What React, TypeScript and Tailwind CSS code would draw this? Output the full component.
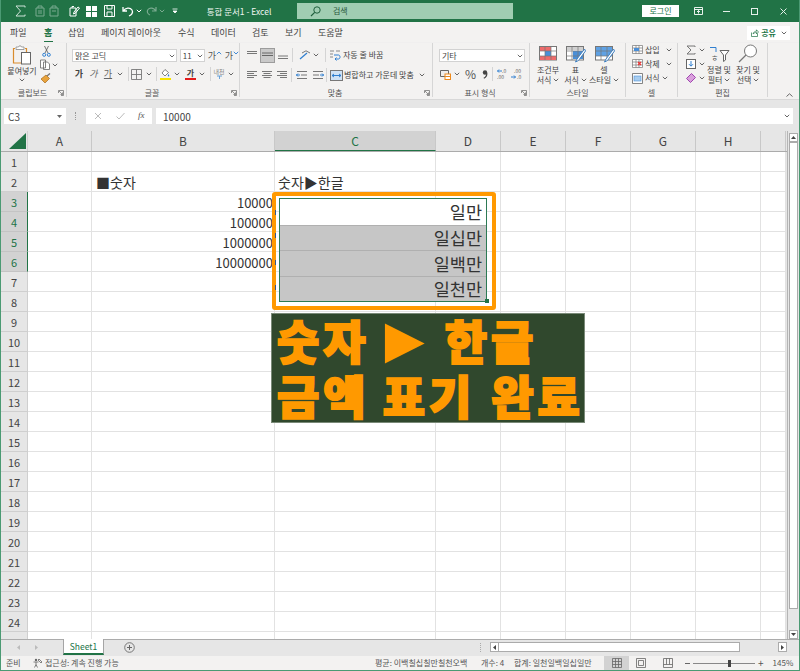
import type { ReactNode } from "react";

const KR = "font-['Noto_Sans_CJK_KR','Noto_Sans',sans-serif]";

const COLS = [
  { name: "A", w: "w-[64px]" },
  { name: "B", w: "w-[183px]" },
  { name: "C", w: "w-[161px]" },
  { name: "D", w: "w-[65px]" },
  { name: "E", w: "w-[65px]" },
  { name: "F", w: "w-[65px]" },
  { name: "G", w: "w-[65px]" },
  { name: "H", w: "w-[65px]" },
  { name: "", w: "w-[25px]" },
];

const ROWS = Array.from({ length: 25 }, (_, i) => i + 1);

const CELLS: Record<string, string> = {
  B2: "■숫자",
  C2: "숫자▶한글",
  B3: "10000",
  B4: "100000",
  B5: "1000000",
  B6: "10000000",
};

function Chev({ className = "" }: { className?: string }) {
  return (
    <svg width="6" height="4" viewBox="0 0 6 4" className={`shrink-0 ${className}`}>
      <path d="M.8.8 3 3l2.2-2.2" fill="none" stroke="#666" strokeWidth="1" />
    </svg>
  );
}

function WChev({ faint }: { faint?: boolean }) {
  return (
    <svg width="6" height="4" viewBox="0 0 6 4" className={faint ? "opacity-40" : ""}>
      <path d="M.8.8 3 3l2.2-2.2" fill="none" stroke="#fff" strokeWidth="1" />
    </svg>
  );
}

function Sep({ className = "" }: { className?: string }) {
  return <div className={`h-[14px] w-px shrink-0 bg-[#d4d4d4] ${className}`} />;
}

function Launcher() {
  return (
    <svg width="6" height="6" viewBox="0 0 6 6" className="mr-[2px] shrink-0">
      <path d="M.5 3V.5H5.500V5.500H3M1 1l3.500 3.500M2.500 4.500H4.500V2.500" fill="none" stroke="#777" strokeWidth=".8" />
    </svg>
  );
}

function Group({
  w,
  label,
  launcher,
  children,
}: {
  w: string;
  label: string;
  launcher?: boolean;
  children: ReactNode;
}) {
  return (
    <div className={`${w} mb-[2px] flex shrink-0 flex-col border-r border-[#d6d6d6]`}>
      <div className="h-[46px]">{children}</div>
      <div className="flex h-[9px] items-center justify-between">
        <span className="w-[6px]" />
        <span className="text-[8px] leading-none text-[#555]">{label}</span>
        {launcher ? <Launcher /> : <span className="w-[6px]" />}
      </div>
    </div>
  );
}

function Align({ kind }: { kind: "l" | "c" | "r" }) {
  const p =
    kind === "l"
      ? "M1 1.500H11M1 3.500H8M1 5.500H11M1 7.500H8"
      : kind === "c"
        ? "M1 1.500H11M2.500 3.500H9.500M1 5.500H11M2.500 7.500H9.500"
        : "M1 1.500H11M4 3.500H11M1 5.500H11M4 7.500H11";
  return (
    <svg width="12" height="10" viewBox="0 0 12 10">
      <path d={p} stroke="#777" strokeWidth="1" />
    </svg>
  );
}

function GridIcon({ tint, brush }: { tint: "red" | "blue" | "cell"; brush?: boolean }) {
  return (
    <svg width="20" height="17" viewBox="0 0 20 17" className="ml-[1px]">
      <rect x=".5" y=".5" width="17" height="13.500" fill="#fff" stroke="#777" />
      {tint === "red" && (
        <>
          <rect x="1" y="1" width="11" height="4" fill="#ee6b6b" />
          <rect x="1" y="10" width="16" height="4" fill="#ee6b6b" />
          <rect x="6" y="5" width="6" height="5" fill="#4a8fd8" />
        </>
      )}
      {tint === "blue" && (
        <>
          <rect x="1" y="1" width="16" height="3" fill="#d0d0d0" />
          <rect x="7" y="5" width="10" height="8" fill="#4a8fd8" />
        </>
      )}
      {tint === "cell" && <rect x="1" y="1" width="16" height="9" fill="#5ea1e4" />}
      <path d="M6 1V14M12 1V14M1 5H17M1 10H17" stroke="#777" strokeWidth=".7" />
      {brush && <path d="M18.500 3 11 13l-1.500 3 3-1.500L19.500 5z" fill="#fff" stroke="#3f7fbf" strokeWidth="1" />}
    </svg>
  );
}

function QuickBar() {
  return (
    <div className="flex h-[22px] shrink-0 items-center bg-[#217346] text-white">
      <div className="flex w-[190px] items-center pl-[14px]">
        <svg width="11" height="12" viewBox="0 0 11 12">
          <path d="M10 2.500V1H1l4.500 5L1 11h9V9.500" fill="none" stroke="#cfe3d8" strokeWidth="1" />
        </svg>
        <svg width="10" height="12" viewBox="0 0 10 12" className="ml-[9px] opacity-40">
          <path d="M1 3h8v8H1zM3 3V1h4v2M3 6h4M3 8h4" fill="none" stroke="#fff" />
        </svg>
        <svg width="10" height="12" viewBox="0 0 10 12" className="ml-[4px] opacity-40">
          <path d="M1 3h8v8H1zM3 3V1h4v2M3 6h4" fill="none" stroke="#fff" />
        </svg>
        <svg width="11" height="12" viewBox="0 0 11 12" className="ml-[10px]">
          <path d="M1 3h6v8H1zM3 3V1.500h2M5 7l4-5 1.500 1-4 5-2 1z" fill="none" stroke="#fff" />
        </svg>
        <svg width="11" height="11" viewBox="0 0 11 11" className="ml-[6px]">
          <path d="M0 0h5v5H0zM6 0h5v5H6zM0 6h5v5H0zM6 6h5v5H6z" fill="#fff" />
        </svg>
        <svg width="11" height="12" viewBox="0 0 11 12" className="ml-[7px]">
          <path d="M.5.500h10v11H.5zM3 .500v3.500h5V.500M3 11.500V7h5v4.500" fill="none" stroke="#fff" />
        </svg>
        <svg width="12" height="11" viewBox="0 0 12 11" className="ml-[7px]">
          <path d="M1 1v4h4M1.300 4.800C3.500 1.800 8 1 10 4c1.500 2.500-.5 5-3 6" fill="none" stroke="#fff" strokeWidth="1.300" />
        </svg>
        <span className="ml-[2px]">
          <WChev />
        </span>
        <svg width="11" height="10" viewBox="0 0 11 10" className="ml-[4px] opacity-40">
          <path d="M10 1v4H6M9.700 4.800C8 2 4 1 2 3.500c-1.500 2-.5 4.500 2 5.500" fill="none" stroke="#fff" strokeWidth="1.200" />
        </svg>
        <span className="ml-[2px]">
          <WChev faint />
        </span>
        <svg width="6" height="6" viewBox="0 0 6 6" className="ml-[7px]">
          <path d="M.5 1h5M1 3l2 2 2-2z" fill="#fff" stroke="#fff" strokeWidth=".8" />
        </svg>
      </div>
      <div className="flex w-[106px] justify-center pr-[10px]">
        <span className="whitespace-nowrap text-[8.500px] text-[#eef5f1]">통합 문서1 - Excel</span>
      </div>
      <div className="flex h-[16px] w-[216px] items-center bg-[#a0cdb2] pl-[13px]">
        <svg width="11" height="11" viewBox="0 0 11 11">
          <circle cx="7" cy="4" r="3.200" fill="none" stroke="#1f5f3d" />
          <path d="M4.700 6.300 1 10" stroke="#1f5f3d" strokeWidth="1.200" />
        </svg>
        <span className="ml-[12px] text-[8px] text-[#2a5a40]">검색</span>
      </div>
      <div className="ml-[129px] flex h-[12px] w-[37px] items-center justify-center bg-white text-[8px] text-[#217346]">
        로그인
      </div>
      <svg width="9" height="8" viewBox="0 0 9 8" className="ml-[15px]">
        <path d="M.5.500h8v7h-8zM.5 2.500h8M4.500 6.500V3.500M3 5l1.500-1.500L6 5" fill="none" stroke="#fff" strokeWidth=".9" />
      </svg>
      <div className="ml-[20px] h-px w-[7px] bg-[#e5efe9]" />
      <div className="ml-[21px] h-[7px] w-[7px] border border-[#e5efe9]" />
      <svg width="7" height="7" viewBox="0 0 7 7" className="ml-[22px]">
        <path d="M.5.500l6 6M6.500.500l-6 6" stroke="#e5efe9" />
      </svg>
    </div>
  );
}

function TabBar() {
  return (
    <div className="flex h-[21px] shrink-0 items-center bg-[#f3f2f1] pl-[1px] text-[9px] text-[#444]">
      <span className="ml-[8px] w-[34px]">파일</span>
      <span className="relative w-[24px] font-semibold text-[#217346]">
        홈
        <span className="absolute -bottom-[3px] left-0 h-[1.500px] w-[9px] bg-[#217346]" />
      </span>
      <span className="w-[33px]">삽입</span>
      <span className="w-[77px] whitespace-nowrap">페이지 레이아웃</span>
      <span className="w-[33px]">수식</span>
      <span className="w-[41px]">데이터</span>
      <span className="w-[33px]">검토</span>
      <span className="w-[33px]">보기</span>
      <span className="w-[33px]">도움말</span>
      <div className="ml-[396px] flex h-[14px] w-[43px] items-center justify-center gap-[2px] bg-white pl-[1px] text-[8px] font-semibold text-[#217346]">
        <svg width="8" height="8" viewBox="0 0 8 8">
          <path d="M.5 3.500v4h6v-3M2 5c.5-2 2-2.800 3.500-2.800V.8L7.500 3 5.500 5V3.500C4 3.500 3 4 2 5z" fill="none" stroke="#217346" strokeWidth=".7" />
        </svg>
        공유
        <Chev className="ml-[3px]" />
      </div>
    </div>
  );
}

function Clipboard() {
  return (
    <Group w="w-[66px]" label="클립보드" launcher>
      <div className="flex">
        <div className="flex w-[42px] flex-col items-center pt-[2px]">
          <svg width="20" height="20" viewBox="0 0 20 20">
            <path d="M3 3.500H1.500V18h8" fill="none" stroke="#d98c2e" strokeWidth="1.200" />
            <path d="M13 3.500h1.500V7" fill="none" stroke="#d98c2e" strokeWidth="1.200" />
            <path d="M4 4.500V2h2.500c0-1.600 3-1.600 3 0H12v2.500z" fill="#fff" stroke="#888" strokeWidth=".8" />
            <rect x="9.500" y="7.500" width="9" height="11.500" fill="#fff" stroke="#666" />
          </svg>
          <span className="whitespace-nowrap text-[8px] leading-[11px] text-[#444]">붙여넣기</span>
          <Chev className="mt-[2px]" />
        </div>
        <div className="flex flex-col items-start pt-[2px]">
          <svg width="9" height="12" viewBox="0 0 9 12" className="ml-[-1px]">
            <path d="M2.500 1 6 8M6.500 1 3 8" stroke="#555" strokeWidth=".8" />
            <circle cx="2.200" cy="9.800" r="1.500" fill="none" stroke="#2f7fd0" />
            <circle cx="6.800" cy="9.800" r="1.500" fill="none" stroke="#2f7fd0" />
          </svg>
          <div className="mt-[2px] flex items-center gap-[1px]">
            <svg width="11" height="11" viewBox="0 0 11 11" className="ml-[-3px]">
              <path d="M.5 1h5v8h-5zM3.500 3h4l2 2v5.500h-6z" fill="#fff" stroke="#666" strokeWidth=".8" />
            </svg>
            <Chev />
          </div>
          <svg width="11" height="11" viewBox="0 0 11 11" className="ml-[-3px] mt-[3px]">
            <path d="M1 6 6 2l3.500 3.500L5 10z" fill="#e8a33c" stroke="#a86a1a" strokeWidth=".7" />
            <path d="M7 3l3-2.500" stroke="#777" strokeWidth="1.400" />
          </svg>
        </div>
      </div>
    </Group>
  );
}

function FontGroup() {
  return (
    <Group w="w-[173px]" label="글꼴" launcher>
      <div className="mt-[6px] flex h-[13px] items-center pl-[5px]">
        <div className="flex h-[13px] w-[105px] items-center justify-between border border-[#d2d2d2] bg-white pl-[2px] pr-[1px] text-[8px] text-[#444]">
          맑은 고딕
          <Chev />
        </div>
        <div className="ml-[3px] flex h-[13px] w-[25px] items-center justify-between border border-[#d2d2d2] bg-white pl-[2px] pr-[1px] text-[8px] text-[#444]">
          11
          <Chev />
        </div>
        <span className="ml-[3px] flex w-[17px] items-start text-[9px] leading-none text-[#555]">
          가
          <svg width="6" height="4" viewBox="0 0 6 4">
            <path d="M.8 3.200 3 1l2.200 2.200" fill="none" stroke="#2f7fd0" strokeWidth=".9" />
          </svg>
        </span>
        <span className="flex items-start text-[9px] leading-none text-[#555]">
          가
          <svg width="6" height="4" viewBox="0 0 6 4">
            <path d="M.8.8 3 3l2.200-2.200" fill="none" stroke="#2f7fd0" strokeWidth=".9" />
          </svg>
        </span>
      </div>
      <div className="mt-[5px] flex h-[14px] items-center pl-[5px] text-[9px] text-[#444]">
        <span className="w-[14px] text-center font-bold">가</span>
        <span className="w-[15px] text-center italic text-[#666]">가</span>
        <span className="w-[14px] text-center text-[#666] underline">가</span>
        <div className="flex w-[9px] justify-center">
          <Chev />
        </div>
        <Sep className="ml-[4px]" />
        <svg width="11" height="11" viewBox="0 0 11 11" className="ml-[2px]">
          <path d="M.5.500h10v10H.5zM5.500.500v10M.5 5.500h10" fill="none" stroke="#777" strokeWidth=".9" />
        </svg>
        <Chev className="ml-[4px]" />
        <Sep className="ml-[4px]" />
        <div className="ml-[3px] flex w-[11px] flex-col items-center">
          <svg width="9" height="8" viewBox="0 0 9 8">
            <path d="M4 .500 1 4l3 3 3.500-3.500z" fill="#fff" stroke="#666" strokeWidth=".8" />
            <path d="M7.500 5c1 1.200 1 2.500 0 2.500S6.500 6.200 7.500 5" fill="#2f7fd0" />
          </svg>
          <div className="mt-[1px] h-[2px] w-[11px] bg-[#f7e300]" />
        </div>
        <Chev className="ml-[3px]" />
        <div className="ml-[5px] flex w-[11px] flex-col items-center">
          <span className="text-[8px] font-bold leading-[8px]">가</span>
          <div className="mt-[1px] h-[2px] w-[11px] bg-[#e31b1b]" />
        </div>
        <Chev className="ml-[3px]" />
        <Sep className="ml-[5px]" />
        <div className="ml-[1px] flex w-[14px] flex-col items-center text-[6px] leading-[7px] text-[#888]">
          <span>내천</span>
          <svg width="7" height="5" viewBox="0 0 7 5">
            <path d="M1 1h5M3.500 1v3" fill="none" stroke="#5a9ad8" strokeWidth=".9" />
          </svg>
        </div>
        <Chev className="ml-[2px]" />
      </div>
    </Group>
  );
}

function AlignGroup() {
  return (
    <Group w="w-[193px]" label="맞춤" launcher>
      <div className="mt-[5px] flex h-[14px] items-center pl-[6px]">
        <svg width="12" height="10" viewBox="0 0 12 10">
          <path d="M1 1.500H11M1 3.500H11" stroke="#777" />
        </svg>
        <div className="ml-[2px] flex h-[15px] w-[15px] items-center justify-center border border-[#9c9c9c] bg-[#c9c9c9]">
          <svg width="11" height="8" viewBox="0 0 11 8">
            <path d="M0 2H11M0 4.500H11" stroke="#666" />
          </svg>
        </div>
        <svg width="12" height="10" viewBox="0 0 12 10" className="ml-[2px]">
          <path d="M1 6H11M1 8.500H11" stroke="#777" />
        </svg>
        <Sep className="ml-[3px]" />
        <svg width="12" height="10" viewBox="0 0 12 10" className="ml-[6px]">
          <path d="M1 9 8 3" stroke="#2f7fd0" strokeWidth="1.200" />
          <path d="M3 3 7 .8 11 3" fill="none" stroke="#777" />
        </svg>
        <Chev className="ml-[2px]" />
        <Sep className="ml-[6px]" />
        <svg width="12" height="12" viewBox="0 0 12 12" className="ml-[3px]">
          <path d="M1 2H5M7 2H11M1 5H4M1 8H4" stroke="#888" />
          <path d="M5 6H9.500C11.500 6 11.500 10 9.500 10H6M7.500 8.500 6 10l1.500 1.500" fill="none" stroke="#2f7fd0" />
        </svg>
        <span className="ml-[2px] whitespace-nowrap text-[8px] text-[#444]">자동 줄 바꿈</span>
      </div>
      <div className="mt-[6px] flex h-[14px] items-center pl-[6px]">
        <Align kind="l" />
        <span className="ml-[3px]">
          <Align kind="c" />
        </span>
        <span className="ml-[3px]">
          <Align kind="r" />
        </span>
        <Sep className="ml-[3px]" />
        <svg width="12" height="10" viewBox="0 0 12 10" className="ml-[4px]">
          <path d="M1 1.500H11M5 5H11M1 8.500H11" stroke="#777" />
          <path d="M4 5H0M2 3.500.5 5 2 6.500" fill="none" stroke="#2f7fd0" />
        </svg>
        <svg width="12" height="10" viewBox="0 0 12 10" className="ml-[4px]">
          <path d="M1 1.500H11M1 5H7M1 8.500H11" stroke="#777" />
          <path d="M8 5h4M10 3.500 11.500 5 10 6.500" fill="none" stroke="#2f7fd0" />
        </svg>
        <Sep className="ml-[2px]" />
        <svg width="13" height="11" viewBox="0 0 13 11" className="ml-[3px]">
          <rect x=".5" y=".5" width="12" height="10" fill="#cfe2f5" stroke="#777" />
          <path d="M2 5.500H11M4 4 2 5.500 4 7M9 4l2 1.500L9 7" fill="none" stroke="#2f7fd0" />
        </svg>
        <span className="ml-[1px] whitespace-nowrap text-[8px] text-[#444]">병합하고 가운데 맞춤</span>
        <Chev className="ml-[5px]" />
      </div>
    </Group>
  );
}

function NumberGroup() {
  return (
    <Group w="w-[97px]" label="표시 형식" launcher>
      <div className="mt-[6px] pl-[6px]">
        <div className="flex h-[13px] w-[86px] items-center justify-between border border-[#d2d2d2] bg-white pl-[2px] pr-[1px] text-[8px] text-[#444]">
          기타
          <Chev />
        </div>
      </div>
      <div className="mt-[5px] flex h-[14px] items-center pl-[7px] text-[#555]">
        <svg width="11" height="11" viewBox="0 0 11 11">
          <path d="M.5 1.500h8v6h-8z" fill="#eee" stroke="#666" />
          <rect x="5" y="5" width="5.500" height="5.500" fill="#fff" stroke="#ee8a1d" />
          <path d="M5 7.500h5.500" stroke="#ee8a1d" />
        </svg>
        <Chev className="ml-[3px]" />
        <span className="ml-[4px] w-[13px] text-center text-[12px] leading-none">%</span>
        <svg width="6" height="9" viewBox="0 0 6 9" className="ml-[5px]">
          <circle cx="3" cy="2.500" r="2.200" fill="#444" />
          <path d="M4.800 3C5 5.500 3.500 7.500 1.800 8.300" fill="none" stroke="#444" strokeWidth="1.200" />
        </svg>
        <Sep className="ml-[4px]" />
        <svg width="12" height="12" viewBox="0 0 12 12" className="ml-[4px]">
          <path d="M5 3H0.500M2 1.500.5 3 2 4.500" fill="none" stroke="#2f7fd0" />
          <text x="5" y="5" fontSize="5" fill="#666">
            .0
          </text>
          <text x="0" y="11" fontSize="5" fill="#666">
            .00
          </text>
        </svg>
        <svg width="12" height="12" viewBox="0 0 12 12" className="ml-[2px]">
          <text x="3" y="5" fontSize="5" fill="#666">
            .00
          </text>
          <path d="M0 9h4.500M3 7.500 4.500 9 3 10.500" fill="none" stroke="#2f7fd0" />
          <text x="6" y="11" fontSize="5" fill="#666">
            .0
          </text>
        </svg>
      </div>
    </Group>
  );
}

function BigCmd({ w, icon, a, b }: { w: string; icon: ReactNode; a: string; b: string }) {
  return (
    <div className={`${w} flex shrink-0 flex-col items-center pt-[3px]`}>
      <div className="h-[18px]">{icon}</div>
      <span className="whitespace-nowrap text-[8px] leading-[11px] text-[#444]">{a}</span>
      <span className="flex items-center gap-[2px] whitespace-nowrap text-[8px] leading-[10px] text-[#444]">
        {b}
        <Chev />
      </span>
    </div>
  );
}

function CellRow({ icon, label, chevGap }: { icon: ReactNode; label: string; chevGap: string }) {
  return (
    <div className="flex h-[14px] items-center pl-[6px]">
      {icon}
      <span className="ml-[2px] whitespace-nowrap text-[8px] text-[#444]">{label}</span>
      <Chev className={chevGap} />
    </div>
  );
}

function Ribbon() {
  return (
    <div className="flex h-[57px] shrink-0 border-b border-[#d8d8d8] bg-[#f3f2f1] shadow-[0_1px_2px_#ccc]">
      <Clipboard />
      <FontGroup />
      <AlignGroup />
      <NumberGroup />
      <Group w="w-[96px]" label="스타일">
        <div className="flex">
          <BigCmd w="w-[36px]" icon={<GridIcon tint="red" />} a="조건부" b="서식" />
          <BigCmd w="w-[19px]" icon={<GridIcon tint="blue" brush />} a="표" b="서식" />
          <BigCmd w="w-[38px]" icon={<GridIcon tint="cell" brush />} a="셀" b="스타일" />
        </div>
      </Group>
      <Group w="w-[52px]" label="셀">
        <CellRow
          label="삽입"
          chevGap="ml-[6px]"
          icon={
            <svg width="11" height="10" viewBox="0 0 11 10">
              <path d="M.5.500h10v8H.5zM.5 3h10M.5 6h10M4 .5v8M7 .5v8" fill="#fff" stroke="#777" strokeWidth=".7" />
              <rect x="2" y="3" width="5" height="3" fill="#4a8fd8" />
            </svg>
          }
        />
        <CellRow
          label="삭제"
          chevGap="ml-[6px]"
          icon={
            <svg width="11" height="10" viewBox="0 0 11 10">
              <path d="M.5.500h10v8H.5zM.5 3h10M.5 6h10M4 .5v8M7 .5v8" fill="#fff" stroke="#777" strokeWidth=".7" />
              <path d="M6 3l3 3M9 3 6 6" stroke="#e33" strokeWidth="1.200" />
            </svg>
          }
        />
        <CellRow
          label="서식"
          chevGap="ml-[2px]"
          icon={
            <svg width="11" height="11" viewBox="0 0 11 11">
              <path d="M.5.500h10v10H.5z" fill="#fff" stroke="#666" strokeWidth=".8" />
              <rect x="2" y="3" width="7" height="5" fill="#a8cdf0" stroke="#4a8fd8" strokeWidth=".6" />
            </svg>
          }
        />
      </Group>
      <Group w="w-[90px]" label="편집">
        <div className="flex">
          <div className="flex w-[28px] shrink-0 flex-col items-start pl-[8px]">
            <div className="flex h-[14px] items-center gap-[3px]">
              <svg width="10" height="10" viewBox="0 0 10 10">
                <path d="M9 2V1H1l4 4-4 4h8V8" fill="none" stroke="#777" />
              </svg>
              <Chev />
            </div>
            <div className="flex h-[14px] items-center gap-[3px]">
              <svg width="10" height="10" viewBox="0 0 10 10">
                <rect x=".5" y=".5" width="9" height="9" fill="#fff" stroke="#666" />
                <path d="M5 2v5M3 5.200 5 7.200 7 5.200" fill="none" stroke="#2f7fd0" />
              </svg>
              <Chev />
            </div>
            <div className="flex h-[14px] items-center gap-[3px]">
              <svg width="10" height="10" viewBox="0 0 10 10">
                <path d="M.5 5.500 5.500.5 9.500 4.500 4.500 9.500z" fill="#d9a0dc" stroke="#a045b0" />
              </svg>
              <Chev />
            </div>
          </div>
          <BigCmd
            w="w-[26px]"
            a="정렬 및"
            b="필터"
            icon={
              <svg width="21" height="17" viewBox="0 0 21 17">
                <path d="M1 1.500H7V6" fill="none" stroke="#2f7fd0" />
                <path d="M11 4.500h9L16.500 9v5l-2 1.500V9z" fill="#fff" stroke="#666" />
                <text x="2" y="15" fontSize="8" fill="#555">
                  ㅎ
                </text>
              </svg>
            }
          />
          <BigCmd
            w="w-[32px]"
            a="찾기 및"
            b="선택"
            icon={
              <svg width="20" height="19" viewBox="0 0 20 19" className="-mt-[2px]">
                <circle cx="12.500" cy="7" r="6" fill="#fff" stroke="#777" />
                <path d="M8 11 1 18" stroke="#777" strokeWidth="1.200" />
              </svg>
            }
          />
        </div>
      </Group>
      <div className="flex flex-1 items-end justify-end pb-[2px] pr-[6px]">
        <svg width="7" height="4" viewBox="0 0 7 4">
          <path d="M.5 3.500 3.500.8l3 2.700" fill="none" stroke="#666" />
        </svg>
      </div>
    </div>
  );
}

function FormulaBar() {
  return (
    <div className="flex h-[31px] shrink-0 items-start bg-[#e6e6e6] pl-[3px] pr-[6px] pt-[8px]">
      <div className="flex h-[16px] w-[62px] items-center justify-between bg-white px-[4px] text-[10px] text-[#444]">
        C3
        <svg width="5" height="3" viewBox="0 0 5 3">
          <path d="M0 0h5L2.500 3z" fill="#666" />
        </svg>
      </div>
      <div className="ml-[9px] mt-[4px] h-[8px] w-px border-l border-dotted border-[#999]" />
      <div className="ml-[10px] flex h-[16px] w-[66px] items-center bg-white">
        <svg width="8" height="8" viewBox="0 0 8 8" className="ml-[8px]">
          <path d="M1 1l6 6M7 1 1 7" stroke="#bbb" />
        </svg>
        <svg width="9" height="8" viewBox="0 0 9 8" className="ml-[14px]">
          <path d="M.5 4.500 3 7l5.500-6" fill="none" stroke="#bbb" />
        </svg>
        <span className="ml-[13px] font-['Liberation_Serif',serif] text-[9px] italic text-[#555]">fx</span>
      </div>
      <div className="ml-[4px] flex h-[16px] flex-1 items-center justify-between bg-white pl-[7px] pr-[3px] text-[10px] text-[#444]">
        10000
        <Chev />
      </div>
    </div>
  );
}

function SheetGrid() {
  return (
    <div className="relative flex h-[508px] shrink-0 bg-[#e6e6e6]">
      <div className="h-full w-[786px] overflow-hidden">
        <div className="flex h-[21px] border-b border-[#ababab]">
          <div className="flex w-[27px] shrink-0 items-end justify-end border-r border-[#d0d0d0] pb-[2px] pr-[1px]">
            <svg width="17" height="16" viewBox="0 0 17 16">
              <path d="M17 0V16H0z" fill="#217346" />
            </svg>
          </div>
          {COLS.map((c) => (
            <div
              key={c.name + c.w}
              className={`${c.w} flex shrink-0 items-center justify-center border-r border-[#c8c8c8] text-[12px] leading-none ${
                c.name === "C"
                  ? "border-b-[1.500px] border-b-[#217346] bg-[#d2d2d2] text-[#217346]"
                  : "text-[#444]"
              }`}
            >
              {c.name}
            </div>
          ))}
        </div>
        {ROWS.map((r) => {
          const sel = r >= 3 && r <= 6;
          return (
            <div key={r} className="flex h-[20px]">
              <div
                className={`flex w-[27px] shrink-0 items-center justify-center border-b pt-[2px] text-[11px] leading-none ${
                  sel
                    ? "border-b-[#c4c4c4] border-r-[1.500px] border-r-[#217346] bg-[#d2d2d2] text-[#217346]"
                    : "border-r border-[#cfcfcf] text-[#444]"
                }`}
              >
                {r}
              </div>
              {COLS.map((c) => {
                const v = CELLS[c.name + r];
                const num = c.name === "B" && sel;
                return (
                  <div
                    key={c.name + c.w}
                    className={`${c.w} flex shrink-0 items-center overflow-visible whitespace-nowrap border-b border-r border-[#e2e2e2] bg-white pt-px leading-none text-[#333] ${
                      num ? "justify-end pr-px text-[13px]" : c.name === "B" ? "pl-[4px] text-[14px]" : "pl-[3px] text-[14px]"
                    }`}
                  >
                    {v}
                  </div>
                );
              })}
            </div>
          );
        })}
      </div>
      <div className="flex w-[12px] flex-col border-l border-[#b5b5b5] pl-[1px] pt-[2px]">
        <div className="flex h-[9px] w-[9px] items-center justify-center border border-[#ababab] bg-white">
          <svg width="5" height="3" viewBox="0 0 5 3">
            <path d="M0 3h5L2.500 0z" fill="#444" />
          </svg>
        </div>
        <div className="h-[467px] w-[9px] border border-[#ababab] bg-white" />
        <div className="flex-1" />
        <div className="flex h-[9px] w-[9px] items-center justify-center border border-[#ababab] bg-white">
          <svg width="5" height="3" viewBox="0 0 5 3">
            <path d="M0 0h5L2.500 3z" fill="#444" />
          </svg>
        </div>
      </div>

      <div className="absolute left-[271px] top-[61px] h-[118px] w-[224px] rounded-[3px] border-[4px] border-[#ff9900]">
        <div className="ml-[3px] mt-[2px] flex h-[104px] w-[208px] flex-col border-[1.500px] border-[#2c7a54] bg-white">
          {["일만", "일십만", "일백만", "일천만"].map((t, i) => (
            <div
              key={t}
              className={`flex h-[25.500px] items-center justify-end pr-[4px] text-[17.500px] leading-none text-[#333] ${
                i === 0 ? "bg-white" : "border-t border-[#b0b0b0] bg-[#c6c6c6]"
              }`}
            >
              {t}
            </div>
          ))}
        </div>
        <div className="absolute left-[209px] top-[103px] h-[4px] w-[4px] bg-[#217346]" />
        <div className="absolute -left-[1px] top-[14px] h-[5px] w-px bg-[#3a5588]" />
        <div className="absolute -left-[1px] top-[37px] h-[5px] w-px bg-[#3a5588]" />
        <div className="absolute -left-[1px] top-[64px] h-[5px] w-px bg-[#3a5588]" />
        <div className="absolute -left-[1px] top-[89px] h-[5px] w-px bg-[#3a5588]" />
      </div>
      <div className="absolute left-[270px] top-[182px] flex h-[110px] w-[314px] flex-col border border-[#7a8a78] bg-[#30482d] pl-[5px] font-black text-[#ff9900] [-webkit-text-stroke:2px_#ff9900]">
        <div className="flex h-[54px] items-center whitespace-nowrap pb-[4px] text-[46px] leading-none tracking-[4px]">
          <span>숫자</span>
          <span className="ml-[15px] font-['DejaVu_Sans',sans-serif] text-[52px] leading-[50px] tracking-normal [-webkit-text-stroke:0]">▶</span>
          <span className="ml-[20px]">한글</span>
        </div>
        <div className="mt-[1px] flex h-[54px] items-center whitespace-nowrap pb-[4px] text-[46px] leading-none tracking-[4px]">
          <span>금액</span>
          <span className="ml-[13px]">표기</span>
          <span className="ml-[16px]">완료</span>
        </div>
      </div>
    </div>
  );
}

function SheetTabs() {
  return (
    <div className="flex h-[17px] shrink-0 items-start border-t border-[#ababab] bg-[#e6e6e6]">
      <div className="flex h-[15px] w-[62px] items-center pl-[16px]">
        <svg width="3" height="5" viewBox="0 0 3 5">
          <path d="M3 0v5L0 2.500z" fill="#bbb" />
        </svg>
        <svg width="3" height="5" viewBox="0 0 3 5" className="ml-[15px]">
          <path d="M0 0v5l3-2.500z" fill="#bbb" />
        </svg>
      </div>
      <div className="-mt-px flex h-[16px] w-[41px] items-center justify-center border-x border-b-2 border-[#a5a5a5] border-b-[#217346] bg-white text-[8.500px] text-[#217346]">
        Sheet1
      </div>
      <svg width="11" height="11" viewBox="0 0 11 11" className="ml-[20px] mt-[2px]">
        <circle cx="5.500" cy="5.500" r="4.800" fill="none" stroke="#777" />
        <path d="M3 5.500h5M5.500 3v5" stroke="#666" />
      </svg>
      <div className="ml-[345px] mt-[3px] h-[9px] w-px border-l border-dotted border-[#aaa]" />
      <div className="ml-[9px] mt-[2px] flex h-[10px] w-[9px] items-center justify-center border border-[#ababab] bg-white">
        <svg width="3" height="5" viewBox="0 0 3 5">
          <path d="M3 0v5L0 2.500z" fill="#444" />
        </svg>
      </div>
      <div className="mt-[2px] h-[10px] w-[241px] border border-l-0 border-[#ababab] bg-white" />
      <div className="ml-[38px] mt-[2px] flex h-[10px] w-[9px] items-center justify-center border border-[#ababab] bg-white">
        <svg width="3" height="5" viewBox="0 0 3 5">
          <path d="M0 0v5l3-2.500z" fill="#444" />
        </svg>
      </div>
    </div>
  );
}

function StatusBar() {
  return (
    <div className="flex h-[14px] shrink-0 items-center bg-[#f3f2f1] text-[8px] text-[#555]">
      <span className="ml-[5px] w-[27px]">준비</span>
      <svg width="10" height="10" viewBox="0 0 10 10">
        <circle cx="3" cy="2" r="1.200" fill="#666" />
        <path d="M.5 4h5M3 4v2.500L1.500 9.500M3 6.500l1.500 3M6 1l3 3-1 1-3-3z" fill="none" stroke="#666" strokeWidth=".8" />
      </svg>
      <span className="ml-[2px] w-[330px] whitespace-nowrap">접근성: 계속 진행 가능</span>
      <span className="w-[106px] whitespace-nowrap">평균: 이백칠십칠만칠천오백</span>
      <span className="w-[33px] whitespace-nowrap">개수: 4</span>
      <span className="w-[90px] whitespace-nowrap">합계: 일천일백일십일만</span>
      <div className="flex h-[14px] w-[25px] items-center justify-center bg-[#d2d2d2]">
        <svg width="10" height="10" viewBox="0 0 10 10">
          <path d="M.5.500h9v9h-9zM3.500.500v9M6.500.500v9M.5 3.500h9M.5 6.500h9" fill="none" stroke="#666" strokeWidth=".8" />
        </svg>
      </div>
      <svg width="10" height="10" viewBox="0 0 10 10" className="ml-[7px]">
        <path d="M.5.500h9v9h-9zM2.500 2.500h5v5h-5z" fill="none" stroke="#666" strokeWidth=".8" />
      </svg>
      <svg width="10" height="10" viewBox="0 0 10 10" className="ml-[17px]">
        <path d="M.5.500h9v9h-9zM.5 6.500h9M3.500.500v6M6.500.500v6" fill="none" stroke="#666" strokeWidth=".8" />
      </svg>
      <span className="ml-[12px] h-px w-[5px] bg-[#666]" />
      <div className="relative ml-[3px] h-px w-[62px] bg-[#888]">
        <div className="absolute -top-[3px] left-[35px] h-[7px] w-[3px] bg-[#444]" />
      </div>
      <span className="ml-[3px] text-[10px] leading-none">+</span>
      <span className="ml-[9px] whitespace-nowrap">145%</span>
    </div>
  );
}

export default function App() {
  return (
    <div className={`${KR} flex h-[671px] w-[800px] flex-col overflow-hidden border-x border-b border-[#4b9a73] bg-[#e6e6e6]`}>
      <QuickBar />
      <TabBar />
      <Ribbon />
      <FormulaBar />
      <SheetGrid />
      <SheetTabs />
      <StatusBar />
    </div>
  );
}
